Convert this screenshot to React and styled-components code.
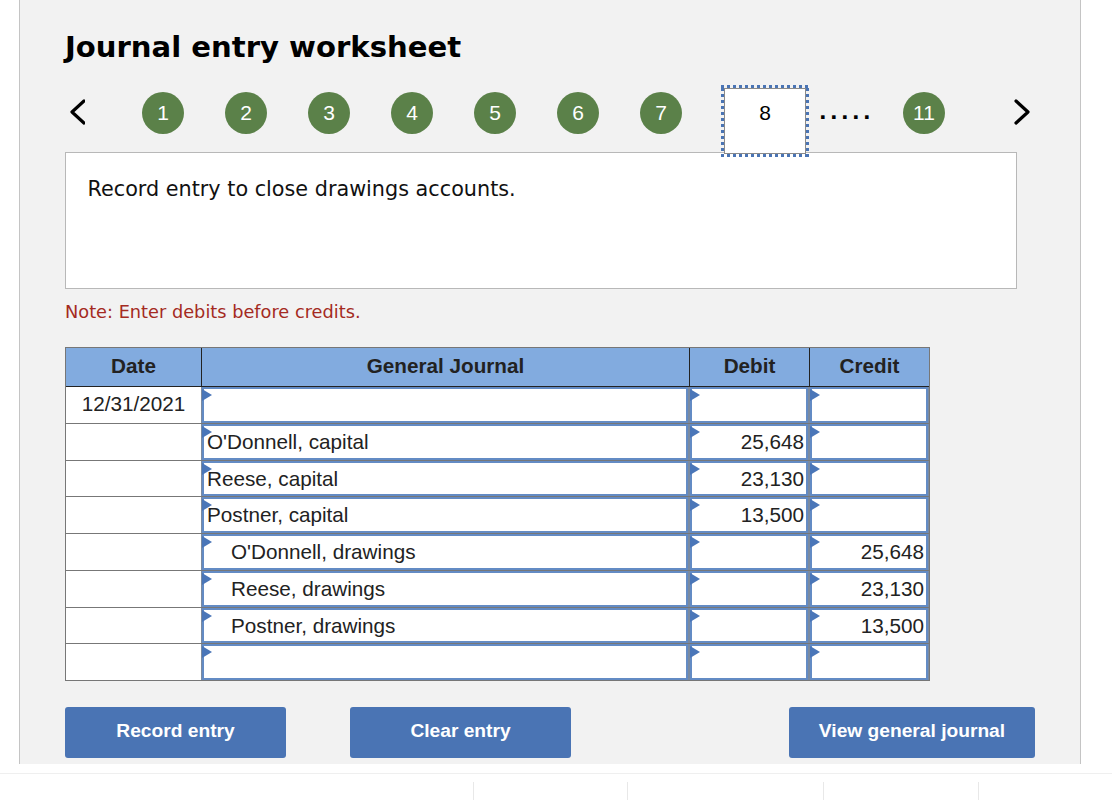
import React from "react";
import styled, { createGlobalStyle } from "styled-components";

const Global = createGlobalStyle`
  html, body { margin: 0; padding: 0; background: #fff; }
  body { height: 800px; overflow: hidden; font-family: "Liberation Sans", Arial, sans-serif; color: #222; }
`;

const Panel = styled.main`
  box-sizing: border-box;
  margin-left: 19px;
  width: 1062px;
  height: 764px;
  padding: 29px 0 0 45px;
  background: #f2f2f2;
  border-left: 1px solid #c4c4c4;
  border-right: 1px solid #c4c4c4;
`;
const Title = styled.h1`
  margin: 0;
  height: 56px;
  font: bold 29.1px/36px "DejaVu Sans", Verdana, sans-serif;
  color: #000;
`;
const Nav = styled.nav`
  display: flex;
  align-items: flex-start;
  height: 72px;
  width: 970px;
`;
const Chevron = styled.svg`
  flex: none;
  width: 16px;
  height: 26px;
  margin: ${(p) => p.$margin};
  fill: none;
  stroke: #000;
  stroke-width: 3.2;
  stroke-linecap: round;
  stroke-linejoin: round;
`;
const Step = styled.span`
  flex: none;
  box-sizing: border-box;
  width: 42px;
  height: 42px;
  margin: 7px 41px 0 0;
  border-radius: 50%;
  background: #5b8149;
  color: #fff;
  font-size: 21px;
  line-height: 41px;
  text-align: center;
`;
const dot = "#4a74b4";
const CurrentFrame = styled.div`
  position: relative;
  z-index: 1;
  flex: none;
  box-sizing: border-box;
  width: 88px;
  height: 72px;
  margin: 0 10px 0 -2px;
  padding: 3px;
  background:
    repeating-linear-gradient(90deg, ${dot} 0 3px, transparent 3px 6px) top / 100% 3px no-repeat,
    repeating-linear-gradient(90deg, ${dot} 0 3px, transparent 3px 6px) bottom / 100% 3px no-repeat,
    repeating-linear-gradient(0deg, ${dot} 0 3px, transparent 3px 6px) left / 3px 100% no-repeat,
    repeating-linear-gradient(0deg, ${dot} 0 3px, transparent 3px 6px) right / 3px 100% no-repeat;
`;
const Current = styled.div`
  box-sizing: border-box;
  height: 66px;
  padding-top: 12px;
  border: 1px solid #8a8a8a;
  background: #fff;
  color: #000;
  font-size: 21px;
  line-height: 24px;
  text-align: center;
`;
const Dots = styled.span`
  flex: none;
  width: 84px;
  margin-top: 14px;
  font: bold 20px/26px "DejaVu Sans", Verdana, sans-serif;
  letter-spacing: 3.4px;
  color: #000;
  white-space: nowrap;
`;
const Prompt = styled.section`
  box-sizing: border-box;
  width: 952px;
  height: 137px;
  margin-top: -5px;
  padding: 23px 21.5px;
  border: 1px solid #b8b8b8;
  background: #fff;
  color: #111;
  font: 20.75px/26px "DejaVu Sans", Verdana, sans-serif;
`;
const Note = styled.p`
  margin: 12px 0 24px;
  height: 22px;
  font: 17.75px/22px "DejaVu Sans", Verdana, sans-serif;
  color: #a42a22;
`;
const Sheet = styled.div`
  width: 865px;
  box-sizing: border-box;
  border: 1px solid #777;
  background: #fff;
`;
const columns = "135px 488px 120px 120px";
const HeadRow = styled.div`
  display: grid;
  grid-template-columns: ${columns};
  height: 38px;
  background: #82abdf;
  border-bottom: 1px solid #222;
`;
const HeadCell = styled.div`
  font-size: 20.7px;
  font-weight: bold;
  line-height: 36px;
  text-align: center;
  color: #222;
  & + & { border-left: 1px solid #222; }
`;
const Row = styled.div`
  display: grid;
  grid-template-columns: ${columns};
  height: ${(p) => p.$h}px;
  box-sizing: border-box;
  border-top: ${(p) => (p.$first ? "0" : "1px solid #777")};
`;
const DateCell = styled.div`
  font-size: 20.7px;
  line-height: 34px;
  text-align: center;
  color: #222;
`;
const Field = styled.div`
  position: relative;
  box-sizing: border-box;
  margin: 0 1px;
  padding: ${(p) => (p.$indent ? "0 0 0 27px" : "0 2px 0 3px")};
  border: 2px solid #638bc4;
  background: #fff;
  box-shadow: 1px 0 0 #7a8aa0, -1px 0 0 #7a8aa0;
  color: #222;
  font-size: 20.7px;
  line-height: 31px;
  text-align: ${(p) => (p.$num ? "right" : "left")};
  white-space: nowrap;
  &::before {
    content: "";
    position: absolute;
    left: -2px;
    top: 0;
    border-left: 10px solid #4a76b8;
    border-top: 6px solid transparent;
    border-bottom: 6px solid transparent;
  }
`;
const Actions = styled.div`
  display: flex;
  gap: 64px;
  margin-top: 26px;
`;
const Action = styled.button`
  box-sizing: border-box;
  width: ${(p) => p.$w}px;
  height: 51px;
  margin-left: ${(p) => p.$left || 0}px;
  padding: 0 0 3px;
  border: 0;
  border-radius: 3px;
  background: #4a74b4;
  color: #fff;
  font: bold 19.2px/24px "Liberation Sans", Arial, sans-serif;
`;
const Footer = styled.footer`
  margin-top: 9px;
  padding: 8px 0 0 473px;
  border-top: 1px solid #efefef;
  display: flex;
`;
const FooterCell = styled.div`
  box-sizing: border-box;
  width: ${(p) => p.$w}px;
  height: 20px;
  border-left: 1px solid #e8e8e8;
`;

const rows = [
  { h: 36, date: "12/31/2021", first: true },
  { h: 37, acct: "O'Donnell, capital", debit: "25,648" },
  { h: 36, acct: "Reese, capital", debit: "23,130" },
  { h: 37, acct: "Postner, capital", debit: "13,500" },
  { h: 37, acct: "O'Donnell, drawings", indent: true, credit: "25,648" },
  { h: 37, acct: "Reese, drawings", indent: true, credit: "23,130" },
  { h: 36, acct: "Postner, drawings", indent: true, credit: "13,500" },
  { h: 37 },
];

export default function App() {
  return (
    <>
      <Global />
      <Panel>
        <Title>Journal entry worksheet</Title>
        <Nav>
          <Chevron $margin="14px 57px 0 4px" viewBox="0 0 16 26" aria-label="Previous">
            <path d="M15 2 3 13l12 11" />
          </Chevron>
          {[1, 2, 3, 4, 5, 6, 7].map((n) => (
            <Step key={n}>{n}</Step>
          ))}
          <CurrentFrame>
            <Current>8</Current>
          </CurrentFrame>
          <Dots>.....</Dots>
          <Step>11</Step>
          <Chevron $margin="14px 0 0 28px" viewBox="0 0 16 26" aria-label="Next">
            <path d="M2 2l12 11L2 24" />
          </Chevron>
        </Nav>
        <Prompt>Record entry to close drawings accounts.</Prompt>
        <Note>Note: Enter debits before credits.</Note>
        <Sheet>
          <HeadRow>
            <HeadCell>Date</HeadCell>
            <HeadCell>General Journal</HeadCell>
            <HeadCell>Debit</HeadCell>
            <HeadCell>Credit</HeadCell>
          </HeadRow>
          {rows.map((r, i) => (
            <Row key={i} $h={r.h} $first={r.first}>
              <DateCell>{r.date}</DateCell>
              <Field $indent={r.indent}>{r.acct}</Field>
              <Field $num>{r.debit}</Field>
              <Field $num>{r.credit}</Field>
            </Row>
          ))}
        </Sheet>
        <Actions>
          <Action $w={221}>Record entry</Action>
          <Action $w={221}>Clear entry</Action>
          <Action $w={246} $left={154}>View general journal</Action>
        </Actions>
      </Panel>
      <Footer>
        <FooterCell $w={154} />
        <FooterCell $w={196} />
        <FooterCell $w={155} />
        <FooterCell $w={100} />
      </Footer>
    </>
  );
}
